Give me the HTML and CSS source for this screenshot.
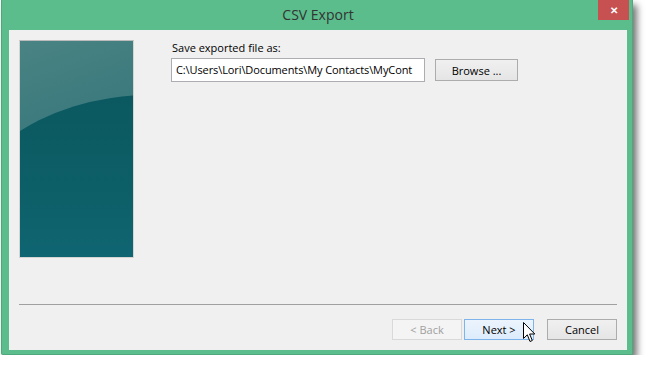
FILE: index.html
```html
<!DOCTYPE html>
<html>
<head>
    <meta charset="UTF-8">
    <meta name="viewport" content="width=device-width, initial-scale=1.0">
    <title>CSV Export</title>

    <link rel="stylesheet" href="styles.css">
</head>

<body>
    <div class="window">
        <div class="titlebar">
            <span class="title">CSV Export</span>
            <div class="close">&#x2715;</div>
        </div>

        <div class="client">
            <div class="main">
                <div class="side"></div>

                <div class="form">
                    <p class="label">Save exported file as:</p>
                    <div class="row">
                        <div class="textbox">C:\Users\Lori\Documents\My Contacts\MyCont</div>
                        <button class="btn browse">Browse ...</button>
                    </div>
                </div>
            </div>

            <div class="separator"></div>

            <div class="buttons">
                <button class="btn disabled">&lt; Back</button>
                <button class="btn focused">Next &gt;
                    <svg class="cursor" width="13" height="21" viewBox="0 0 13 21">
                        <path d="M0.5 0.5 L0.5 16.5 L4.3 12.8 L7 19.5 L9.3 18.5 L6.6 12 L11.8 12 Z" fill="#fff" stroke="#000" stroke-width="1"/>
                    </svg>
                </button>
                <button class="btn">Cancel</button>
            </div>
        </div>
    </div>
</body>
</html>
```

FILE: styles.css
```css
body {
    margin: 0;
    background-color: #fff;
    font-family: "Open Sans", "Noto Sans", sans-serif;
}

.window {
    margin: 0 0 0 1px;
    width: 632px;
    height: 355px;
    box-sizing: border-box;
    padding: 0 5px 6px 7px;
    background-color: #5bbc8c;
    border: 1px solid #4fa87c;
    border-top: none;
    border-radius: 0 0 2px 2px;
    box-shadow: 4px 5px 7px rgba(0, 0, 0, 0.55);
    display: flex;
    flex-direction: column;
}

.titlebar {
    height: 30px;
    position: relative;
    text-align: center;
}

.title {
    line-height: 30px;
    font-size: 14px;
    color: #333;
}

.close {
    position: absolute;
    top: 0;
    right: -2px;
    width: 31px;
    height: 20px;
    background-color: #c75050;
    color: #fff;
    font-size: 10px;
    font-weight: bold;
    line-height: 20px;
    text-align: center;
}

.client {
    flex: 1;
    background-color: #f0f0f0;
    padding: 10px 10px 10px 10px;
    display: flex;
    flex-direction: column;
}

.main {
    height: 264px;
    display: flex;
}

.side {
    width: 113px;
    height: 216px;
    border: 1px solid #d4d4d4;
    border-top-color: #bcbcbc;
    position: relative;
    overflow: hidden;
    background: linear-gradient(160deg, #4a8383 0%, #32747a 60%, #296d73 100%);
}

.side::after {
    content: "";
    position: absolute;
    left: -70px;
    top: 54px;
    width: 400px;
    height: 300px;
    border-radius: 50%;
    background: linear-gradient(180deg, #0b5860 0%, #0d6068 35%, #10697a 70%);
}

.form {
    margin-left: 37px;
}

.label {
    margin: 0 0 3px 1px;
    font-size: 11px;
    color: #000;
}

.row {
    display: flex;
    align-items: center;
    gap: 10px;
}

.textbox {
    width: 244px;
    height: 22px;
    border: 1px solid #abadb3;
    background-color: #fff;
    padding: 0 4px;
    font-size: 11px;
    letter-spacing: -0.1px;
    line-height: 22px;
    white-space: nowrap;
    overflow: hidden;
}

.btn {
    position: relative;
    height: 21px;
    padding: 0;
    border: 1px solid #acacac;
    background: linear-gradient(180deg, #f0f0f0, #e5e5e5);
    font-family: inherit;
    font-size: 11px;
    color: #000;
}

.browse {
    width: 83px;
    height: 22px;
}

.separator {
    border-top: 1px solid #a0a0a0;
}

.buttons {
    margin-top: 14px;
    display: flex;
    justify-content: flex-end;
    gap: 2px;
}

.buttons .btn {
    width: 70px;
}

.buttons .btn:last-child {
    margin-left: 11px;
}

.btn.disabled {
    border-color: #d9d9d9;
    background: #f4f4f4;
    color: #a0a0a0;
}

.btn.focused {
    border-color: #7eb4ea;
    background: linear-gradient(180deg, #ecf4fc, #dcecfc);
}

.cursor {
    position: absolute;
    left: 58px;
    top: 2px;
}
```
